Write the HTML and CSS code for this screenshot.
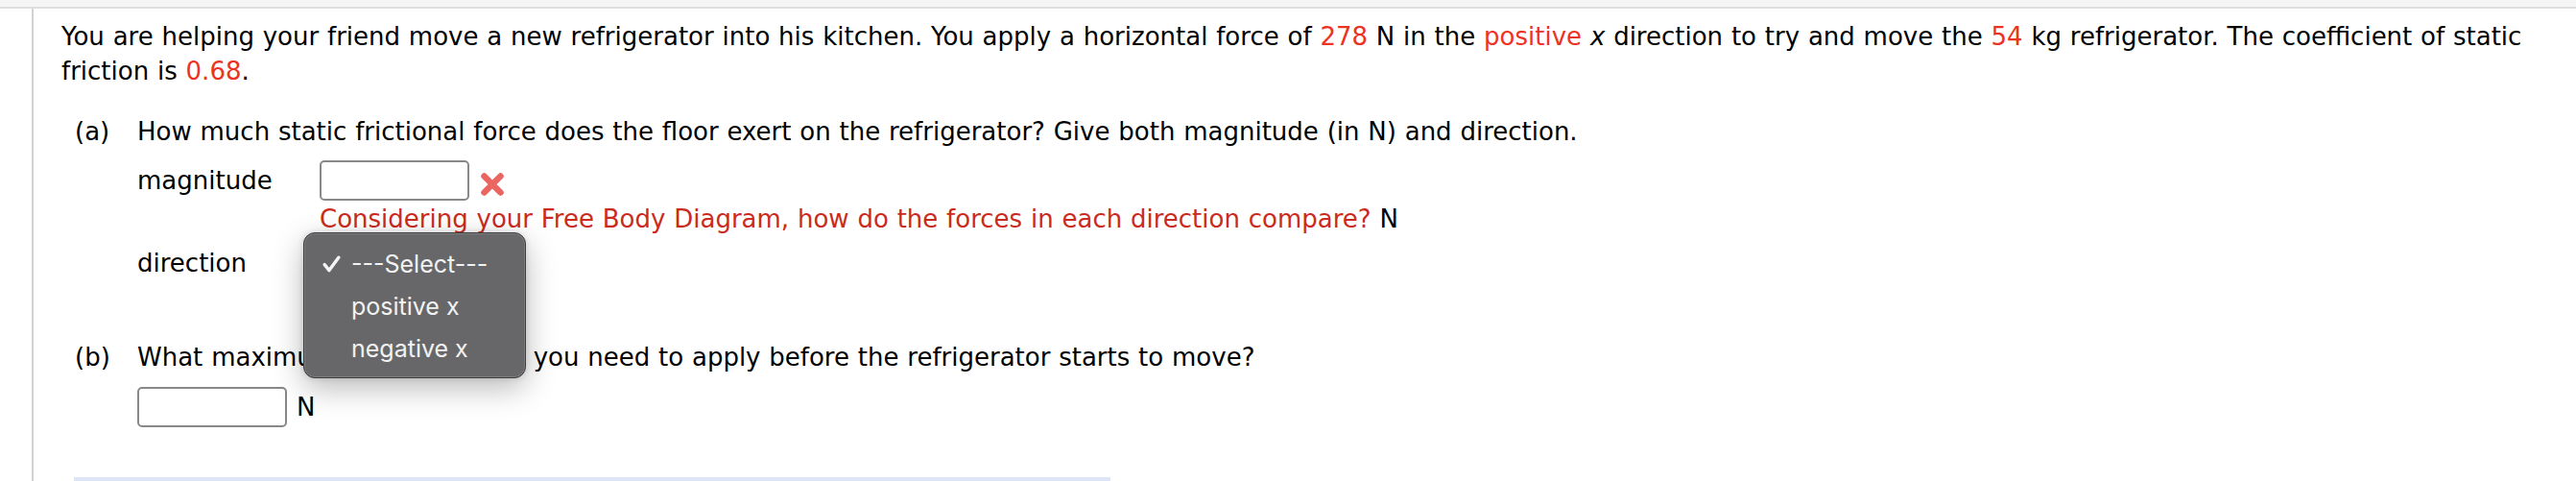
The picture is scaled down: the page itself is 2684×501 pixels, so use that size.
FILE: index.html
```html
<!DOCTYPE html>
<html lang="en">
<head>
<meta charset="utf-8">
<title>Static friction question</title>
<link rel="stylesheet" href="styles.css">
</head>
<body>
<div class="topbar"></div>
<main class="main">
  <p class="question">You are helping your friend move a new refrigerator into his kitchen. You apply a horizontal force of <span class="val">278</span> N in the <span class="val">positive</span> <i>x</i> direction to try and move the <span class="val">54</span> kg refrigerator. The coefficient of static friction is <span class="val">0.68</span>.</p>
  <ol class="parts">
    <li class="part">
      <span class="part-label">(a)</span>
      <div class="part-body">
        <p class="part-q">How much static frictional force does the floor exert on the refrigerator? Give both magnitude (in N) and direction.</p>
        <div class="field-row">
          <span class="field-label">magnitude</span>
          <input class="answer" type="text" aria-label="magnitude">
          <svg class="wrong" width="28" height="28" viewBox="0 0 28 28" aria-hidden="true">
            <path d="M5.5 5.5 L22.5 22.5 M22.5 5.5 L5.5 22.5" stroke="#ea6663" stroke-width="6.5" stroke-linecap="round" fill="none"/>
          </svg>
        </div>
        <p class="hint"><span class="hint-text">Considering your Free Body Diagram, how do the forces in each direction compare?</span> N</p>
        <div class="field-row direction-row">
          <span class="field-label">direction</span>
          <div class="select-wrap">
            <select class="answer-select" aria-label="direction">
              <option></option>
              <option>positive x</option>
              <option>negative x</option>
            </select>
            <ul class="popup">
              <li class="popup-item"><span class="check"><svg width="19" height="18" viewBox="0 0 19 18" aria-hidden="true"><path d="M2.2 9.6 L7 15.6 L16.8 2.2" stroke="#f4f4f4" stroke-width="3.4" stroke-linecap="round" stroke-linejoin="round" fill="none"/></svg></span>---Select---</li>
              <li class="popup-item"><span class="check"></span>positive x</li>
              <li class="popup-item"><span class="check"></span>negative x</li>
            </ul>
          </div>
        </div>
      </div>
    </li>
    <li class="part part-b">
      <span class="part-label">(b)</span>
      <div class="part-body">
        <p class="part-q">What maximum static force do you need to apply before the refrigerator starts to move?</p>
        <div class="field-row field-row-b">
          <input class="answer" type="text" aria-label="maximum force">
          <span class="unit">N</span>
        </div>
      </div>
    </li>
  </ol>
  <div class="footer-bar"></div>
</main>
</body>
</html>
```

FILE: styles.css
```css
html, body {
  margin: 0;
  padding: 0;
  background: #ffffff;
}

body {
  font-family: Verdana, "DejaVu Sans", sans-serif;
  font-size: 26px;
  line-height: 36px;
  word-spacing: 0.55px;
  color: #000000;
  overflow: hidden;
}

.topbar {
  height: 7px;
  background: #f5f5f5;
  border-bottom: 2px solid #dedede;
}

.main {
  display: block;
  margin-left: 33px;
  border-left: 2px solid #d2d2d2;
  padding: 11px 20px 0 29px;
  min-height: 600px;
}

.question {
  margin: 0;
}

.val {
  color: #ec3323;
}

.parts {
  list-style: none;
  margin: 27px 0 0 0;
  padding: 0 0 0 14px;
}

.part {
  display: flex;
}

.part-b {
  margin-top: 59px;
}

.part-label {
  width: 65px;
  flex: none;
}

.part-body {
  flex: 1;
}

.part-q {
  margin: 0;
}

.field-row {
  display: flex;
  align-items: center;
  height: 42px;
  margin-top: 12px;
}

.field-row-b {
  margin-top: 13px;
}

.field-label {
  width: 190px;
  flex: none;
}

.answer {
  box-sizing: border-box;
  width: 156px;
  height: 42px;
  margin: 0;
  padding: 0 6px;
  border: 2px solid #888888;
  border-radius: 5px;
  background: #ffffff;
  font: inherit;
}

.wrong {
  margin-left: 10px;
  margin-top: 7px;
  flex: none;
  filter: blur(0.4px);
}

.unit {
  margin-left: 10px;
}

.hint {
  margin: 1px 0 0 190px;
}

.hint-text {
  color: #cb2a20;
}

.direction-row {
  margin-top: 7px;
}

.select-wrap {
  position: relative;
  width: 200px;
  height: 42px;
}

.answer-select {
  box-sizing: border-box;
  width: 200px;
  height: 42px;
  margin: 0;
  font: inherit;
  font-size: 22px;
}

.popup {
  position: absolute;
  left: -17px;
  top: -11px;
  box-sizing: border-box;
  width: 232px;
  height: 152px;
  margin: 0;
  padding: 10px 0;
  list-style: none;
  background: #676769;
  border: 1px solid #3e3e40;
  border-radius: 12px;
  box-shadow: inset 0 0 0 1px rgba(255, 255, 255, 0.14), 0 10px 32px rgba(0, 0, 0, 0.28), 0 0 6px rgba(0, 0, 0, 0.12);
  font-family: Inter, "Liberation Sans", sans-serif;
  font-size: 25px;
  line-height: 44px;
  word-spacing: 0;
  color: #f2f2f2;
  z-index: 2;
}

.popup-item {
  height: 44px;
  padding-left: 19px;
  white-space: nowrap;
}

.check {
  display: inline-block;
  width: 30px;
}

.footer-bar {
  margin: 52px 0 0 13px;
  width: 1080px;
  height: 40px;
  background: #dde5f7;
}
```
